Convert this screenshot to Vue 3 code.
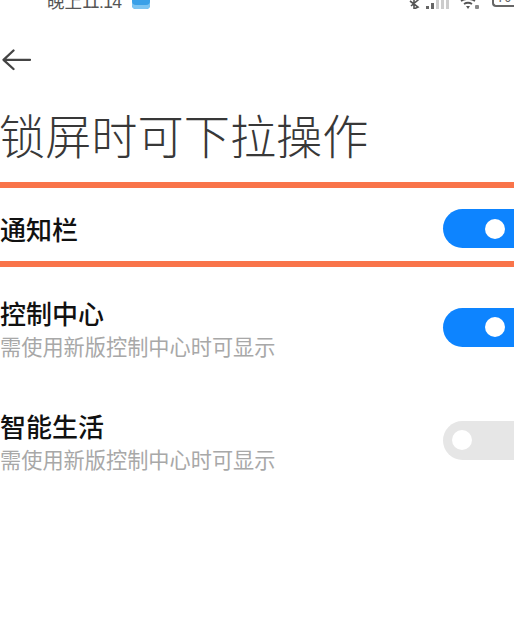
<script setup>
const rows = [
  { title: '控制中心', sub: '需使用新版控制中心时可显示', on: true },
  { title: '智能生活', sub: '需使用新版控制中心时可显示', on: false }
]
</script>

<template>
  <div class="page">
    <div class="status">
      <div class="status-left">
        <span class="time">晚上<span class="digits">11:14</span></span>
        <span class="app-icon"></span>
      </div>
      <div class="status-right">
        <svg class="bt" width="11" height="12" viewBox="0 0 11 12">
          <path d="M1 4 L9 10 L5 12 V0 L9 3 L2 9" fill="none" stroke="#555" stroke-width="1.6" />
        </svg>
        <svg class="signal" width="23" height="12" viewBox="0 0 23 12">
          <rect x="0" y="9" width="3" height="3" fill="#666" />
          <rect x="5" y="6" width="3" height="6" fill="#666" />
          <rect x="10" y="2" width="3" height="10" fill="#ccc" />
          <rect x="15" y="0" width="3" height="12" fill="#ccc" />
          <rect x="20" y="0" width="3" height="12" fill="#ccc" />
        </svg>
        <svg class="wifi" width="20" height="12" viewBox="0 0 20 12">
          <path d="M1 4 Q8 0 15 4 M4 7 Q8 4.5 12 7" fill="none" stroke="#555" stroke-width="1.8" />
          <path d="M6 9 L10 9 L8 12 Z" fill="#555" />
          <rect x="15" y="8" width="4" height="4" rx="1" fill="#888" />
        </svg>
        <div class="battery"><span>70</span></div>
      </div>
    </div>

    <div class="back">
      <svg width="30" height="24" viewBox="0 0 30 24">
        <path d="M12.5 2.5 L2.5 11.8 L12.5 21 M2.5 11.8 H29" fill="none" stroke="#444" stroke-width="2.3" stroke-linecap="round" stroke-linejoin="round" />
      </svg>
    </div>

    <h1 class="title">锁屏时可下拉操作</h1>

    <div class="row-main">
      <span class="row-title">通知栏</span>
      <div class="toggle on"><i class="knob"></i></div>
    </div>

    <div class="list">
      <div v-for="r in rows" :key="r.title" class="row">
        <div class="row-text">
          <div class="row-title">{{ r.title }}</div>
          <div class="row-sub">{{ r.sub }}</div>
        </div>
        <div class="toggle" :class="{ on: r.on }"><i class="knob"></i></div>
      </div>
    </div>
  </div>
</template>

<style>
html, body { margin: 0; background: #fff; }
</style>

<style scoped>
.page {
  width: 514px;
  height: 640px;
  overflow: hidden;
  background: #fff;
  font-family: "Noto Sans CJK SC", "Liberation Sans", sans-serif;
}
.status {
  height: 12px;
  overflow: hidden;
  display: flex;
  justify-content: space-between;
  align-items: flex-end;
  padding-left: 47px;
}
.status-left, .status-right {
  display: flex;
  align-items: flex-end;
}
.time {
  font-size: 17.5px;
  line-height: 24px;
  margin-bottom: -2px;
  color: #555;
}
.digits {
  font-family: "Liberation Sans", sans-serif;
  letter-spacing: -0.6px;
}
.app-icon {
  width: 18px;
  height: 18px;
  margin-left: 10px;
  margin-bottom: 3px;
  border-radius: 4px;
  background: #3aa0e8;
  box-shadow: inset 0 -4px 0 #7cc4f2;
}
.status-right {
  gap: 6px;
  padding-bottom: 3px;
}
.status-right svg { flex: none; }
.wifi { margin-left: 5px; }
.battery {
  width: 22px;
  height: 20px;
  margin-left: 6px;
  margin-bottom: 2px;
  box-sizing: border-box;
  border: 2px solid #666;
  border-right: 0;
  border-radius: 4px 0 0 4px;
  font-size: 13px;
  line-height: 16px;
  color: #666;
  padding-left: 3px;
}
.back {
  height: 24px;
  margin-top: 36px;
  display: flex;
  padding-left: 1px;
}
.title {
  margin: 33px 0 0 -1px;
  font-size: 46.2px;
  font-weight: 300;
  line-height: 58px;
  color: #383838;
}
.row-main {
  margin-top: 19px;
  height: 65px;
  padding-top: 8px;
  border-top: 6px solid #f9744a;
  border-bottom: 6px solid #f9744a;
  display: flex;
  align-items: center;
  justify-content: space-between;
}
.list {
  margin-top: 23px;
  display: flex;
  flex-direction: column;
  gap: 39px;
}
.row {
  display: flex;
  align-items: center;
  justify-content: space-between;
  height: 74px;
}
.row-title {
  font-size: 26px;
  font-weight: 500;
  line-height: 38px;
  color: #111;
}
.row-sub {
  font-size: 21.2px;
  line-height: 28px;
  color: #a8a8a8;
}
.toggle {
  flex: none;
  width: 71px;
  height: 39px;
  display: flex;
  align-items: center;
  padding: 0 9px;
  box-sizing: border-box;
  border-radius: 20px 0 0 20px;
  background: #e6e6e6;
}
.toggle.on {
  background: #0d84ff;
  justify-content: flex-end;
}
.knob {
  width: 20px;
  height: 20px;
  border-radius: 50%;
  background: #fff;
}
</style>
